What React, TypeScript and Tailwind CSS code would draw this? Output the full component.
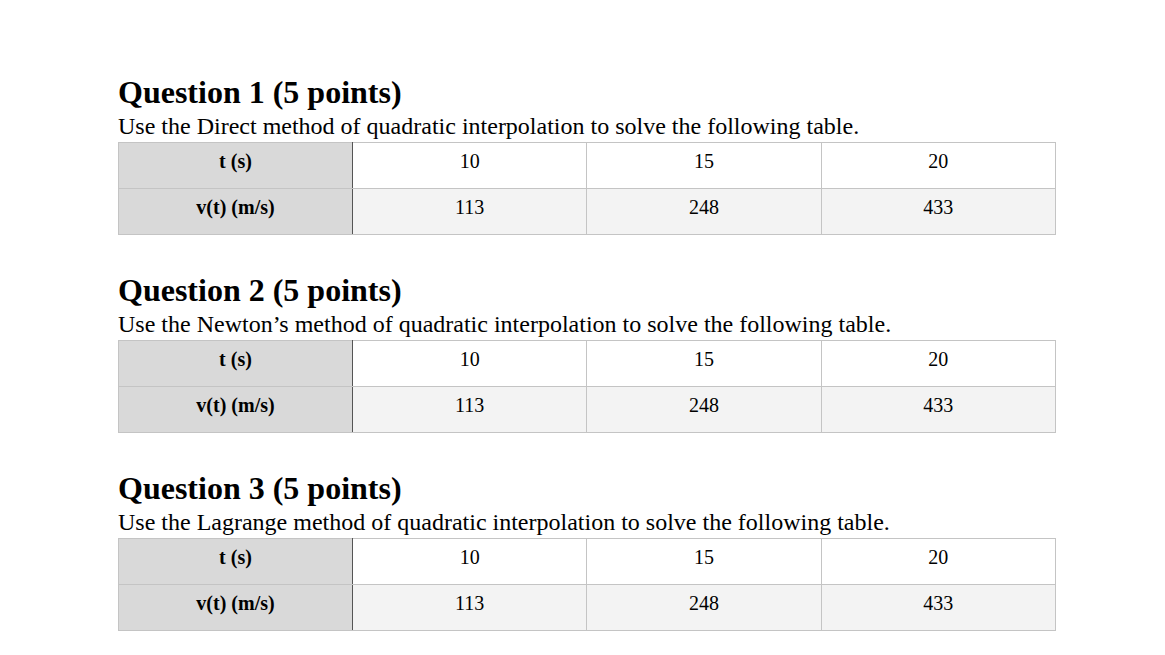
import React from 'react';

interface Question {
    num: number;
    method: string;
}

const questions: Question[] = [
    { num: 1, method: 'Direct' },
    { num: 2, method: 'Newton\u2019s' },
    { num: 3, method: 'Lagrange' },
];

const times = ['10', '15', '20'];
const speeds = ['113', '248', '433'];

function DataTable() {
    return (
        <table className="w-[938px] border-collapse table-fixed text-[20px] leading-[24px]">
            <tbody>
                <tr className="h-[46px] bg-white">
                    <td className="w-[234px] border border-[#c4c4c4] border-r-[#555] bg-[#d9d9d9] text-center align-top pt-[6px] font-bold">t (s)</td>
                    {times.map((t) => (
                        <td key={t} className="border border-[#c4c4c4] text-center align-top pt-[6px]">{t}</td>
                    ))}
                </tr>
                <tr className="h-[46px] bg-[#f3f3f3]">
                    <td className="border border-[#c4c4c4] border-r-[#555] bg-[#d9d9d9] text-center align-top pt-[6px] font-bold">v(t) (m/s)</td>
                    {speeds.map((v) => (
                        <td key={v} className="border border-[#c4c4c4] text-center align-top pt-[6px]">{v}</td>
                    ))}
                </tr>
            </tbody>
        </table>
    );
}

export default function App() {
    return (
        <div className="w-[1165px] h-[655px] bg-white text-black font-['Liberation_Serif',serif] pl-[118px] pt-[74px] flex flex-col gap-[37px] overflow-hidden">
            {questions.map((q) => (
                <section key={q.num} className="flex flex-col">
                    <h2 className="text-[32px] leading-[36px] font-bold">Question {q.num} (5 points)</h2>
                    <p className="text-[24px] leading-[26px] mt-[3px] mb-[3px]">
                        Use the {q.method} method of quadratic interpolation to solve the following table.
                    </p>
                    <DataTable />
                </section>
            ))}
        </div>
    );
}
